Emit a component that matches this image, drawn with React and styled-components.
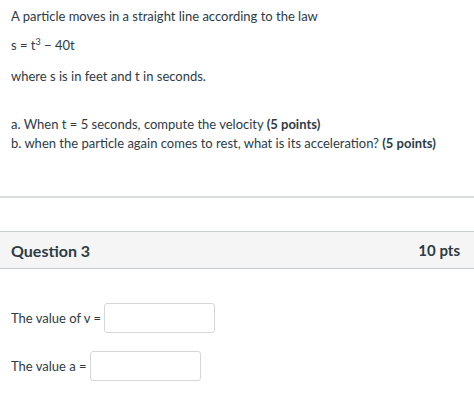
import React from 'react';
import styled, { createGlobalStyle } from 'styled-components';

const GlobalStyle = createGlobalStyle`
  body {
    margin: 0;
    background: #fff;
    font-family: Lato, "Open Sans", sans-serif;
    color: #2d3b45;
  }
`;

const Page = styled.div`
  width: 474px;
`;

const Body = styled.div`
  display: flex;
  flex-direction: column;
  gap: 9px;
  padding: 6px 11px 0;
  font-size: 13px;
  line-height: 20px;
  border-bottom: 2px solid #d9dcde;
  height: 198px;
  box-sizing: border-box;
`;

const Para = styled.p`
  margin: 0;
`;

const Sup = styled.span`
  position: relative;
  top: -5px;
  font-size: 9px;
`;

const List = styled.div`
  margin-top: 20px;
  line-height: 19px;
`;

const Header = styled.div`
  margin-top: 33px;
  display: flex;
  justify-content: space-between;
  align-items: center;
  height: 36px;
  padding: 0 14px 0 11px;
  background: #f5f5f5;
  border-top: 1px solid #c7cdd1;
  border-bottom: 1px solid #c7cdd1;
`;

const Title = styled.span`
  font-size: 16px;
  font-weight: 700;
`;

const Points = styled.span`
  font-size: 15px;
  font-weight: 700;
`;

const Answers = styled.div`
  padding: 34px 11px 0;
  display: flex;
  flex-direction: column;
  gap: 18px;
  font-size: 13px;
`;

const Row = styled.label`
  display: flex;
  align-items: center;
  gap: 3px;
`;

const Field = styled.input`
  width: 111px;
  height: 30px;
  box-sizing: border-box;
  border: 1px solid #d4d7d9;
  border-radius: 3px;
  background: #fff;
`;

export default function App() {
  return (
    <Page>
      <GlobalStyle />
      <Body>
        <Para>A particle moves in a straight line according to the law</Para>
        <Para>
          s = t<Sup>3</Sup> − 40t
        </Para>
        <Para>where s is in feet and t in seconds.</Para>
        <List>
          <div>
            a. When t = 5 seconds, compute the velocity <b>(5 points)</b>
          </div>
          <div>
            b. when the particle again comes to rest, what is its acceleration? <b>(5 points)</b>
          </div>
        </List>
      </Body>
      <Header>
        <Title>Question 3</Title>
        <Points>10 pts</Points>
      </Header>
      <Answers>
        <Row>
          The value of v = <Field type="text" />
        </Row>
        <Row>
          The value a = <Field type="text" />
        </Row>
      </Answers>
    </Page>
  );
}
